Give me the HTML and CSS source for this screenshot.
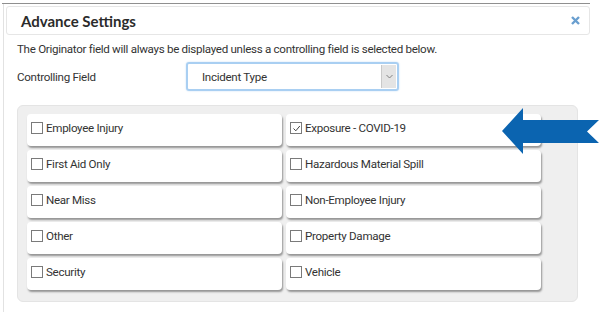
FILE: index.html
```html
<!DOCTYPE html>
<html>
<head>
<meta charset="utf-8">
<link rel="stylesheet" href="styles.css">
</head>
<body>
<div class="topline"></div>
<div class="modal">
  <div class="header">
    <span class="title">Advance Settings</span>
    <svg class="close" width="9" height="9" viewBox="0 0 9 9"><path d="M1 1 L8 8 M8 1 L1 8" stroke="#6a9fcf" stroke-width="2.4" stroke-linecap="butt"/></svg>
  </div>
  <p class="desc">The Originator field will always be displayed unless a controlling field is selected below.</p>
  <div class="field">
    <span class="label">Controlling Field</span>
    <div class="select">
      <span class="value">Incident Type</span>
      <span class="btn"><svg width="7" height="5" viewBox="0 0 7 5"><path d="M0.5 1 L3.5 4 L6.5 1" fill="none" stroke="#777" stroke-width="0.9"/></svg></span>
    </div>
  </div>
  <div class="panel">
    <div class="card"><span class="cb"></span>Employee Injury</div>
    <div class="card"><span class="cb checked"><svg width="9" height="9" viewBox="0 0 9 9"><path d="M1.5 4.5 L3.8 6.8 L7.8 2" fill="none" stroke="#444" stroke-width="1"/></svg></span>Exposure - COVID-19</div>
    <div class="card"><span class="cb"></span>First Aid Only</div>
    <div class="card"><span class="cb"></span>Hazardous Material Spill</div>
    <div class="card"><span class="cb"></span>Near Miss</div>
    <div class="card"><span class="cb"></span>Non-Employee Injury</div>
    <div class="card"><span class="cb"></span>Other</div>
    <div class="card"><span class="cb"></span>Property Damage</div>
    <div class="card"><span class="cb"></span>Security</div>
    <div class="card"><span class="cb"></span>Vehicle</div>
  </div>
</div>
<svg class="arrow" width="100" height="50" viewBox="500 106 100 50"><polygon points="502,131 523,108 523,120 599,120 587,131.5 599,143 523,143 523,154" fill="#0b64b0"/></svg>
</body>
</html>
```
FILE: styles.css
```css
html, body {
  margin: 0;
  padding: 0;
  background: #fff;
  width: 600px;
  height: 315px;
  overflow: hidden;
  font-family: Roboto, "Liberation Sans", sans-serif;
  color: #333;
}
.topline {
  margin: 3px 10px 0 2px;
  height: 0;
  border-top: 1.5px solid #8f8f8f;
}
.modal {
  margin-left: 3px;
  width: 587px;
  border-left: 1px solid #e2e2e2;
  padding: 2px 0 0 2px;
  height: 308px;
  box-sizing: border-box;
}
.header {
  height: 27px;
  width: 559px;
  border: 1px solid #e6e6e6;
  border-radius: 3px;
  display: flex;
  align-items: center;
  justify-content: space-between;
  padding: 0 9px 0 14px;
}
.title {
  font-family: Lato, "Open Sans", sans-serif;
  font-weight: 700;
  font-size: 15px;
  color: #2b2b2b;
  margin-top: 1px;
}
.close { display: block; }
.desc {
  margin: 7px 0 0 11px;
  font-size: 11.6px;
  letter-spacing: -0.3px;
  line-height: 14px;
  color: #333;
}
.field {
  display: flex;
  align-items: center;
  margin: 6px 0 0 11px;
}
.label {
  width: 169px;
  font-size: 11.6px;
  letter-spacing: -0.3px;
}
.select {
  width: 209px;
  height: 25px;
  border: 2px solid #a9cff2;
  border-radius: 3px;
  display: flex;
  align-items: center;
  justify-content: space-between;
  box-shadow: 0 0 2px #c6def5;
}
.value {
  font-size: 11.6px;
  letter-spacing: -0.3px;
  margin-left: 14px;
  color: #333;
}
.btn {
  width: 14px;
  height: 23px;
  margin-right: 1px;
  background: #e4e4e4;
  border-left: 1px solid #c9c9c9;
  display: flex;
  align-items: center;
  justify-content: center;
}
.panel {
  margin: 14px 0 0 11px;
  width: 514px;
  background: #efefef;
  border: 1px solid #e4e4e4;
  border-radius: 6px;
  padding: 8px 36px 11px 9px;
  display: grid;
  grid-template-columns: 255px 255px;
  grid-auto-rows: 32px;
  column-gap: 4px;
  row-gap: 4px;
}
.card {
  background: #fff;
  border-radius: 4px;
  box-shadow: 1px 2px 2px rgba(0,0,0,0.38);
  display: flex;
  align-items: flex-start;
  padding: 6px 4px 0;
  font-size: 11.6px;
  letter-spacing: -0.3px;
  line-height: 16px;
  color: #333;
}
.cb {
  width: 10px;
  height: 10px;
  border: 1px solid #7a7a7a;
  margin: 2px 3px 0 0;
  display: flex;
  align-items: center;
  justify-content: center;
  flex: none;
}
.arrow {
  position: absolute;
  left: 500px;
  top: 106px;
}
```
